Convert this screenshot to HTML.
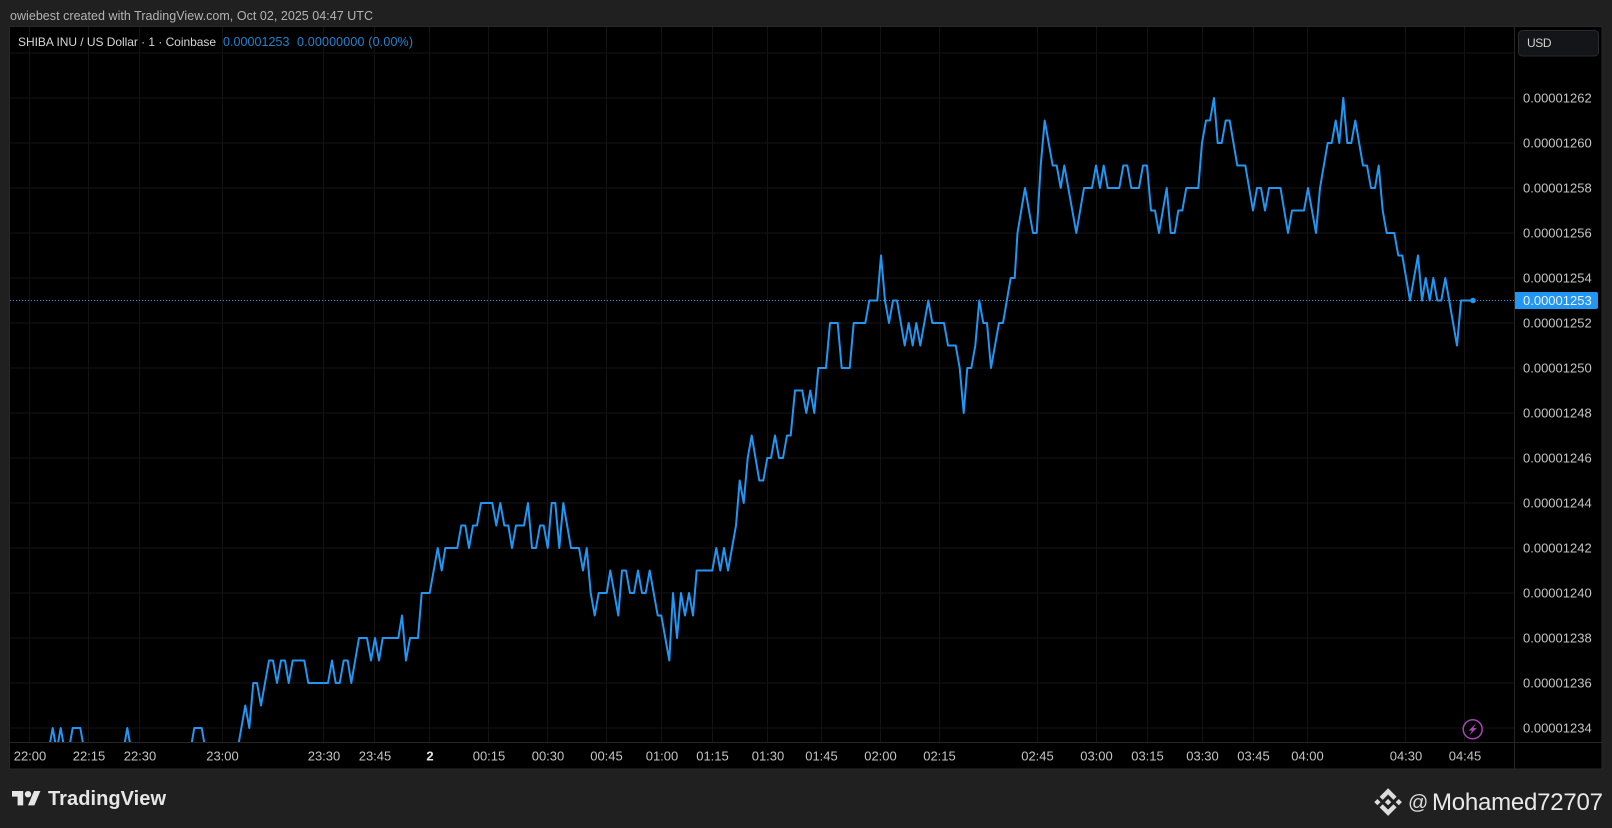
<!DOCTYPE html>
<html lang="en">
<head>
<meta charset="utf-8">
<title>SHIBA INU / US Dollar</title>
<style>
html,body{margin:0;padding:0;background:#202020;width:1612px;height:828px;overflow:hidden}
svg{display:block;filter:blur(.3px)}
text{font-family:"Liberation Sans",sans-serif}
</style>
</head>
<body>
<svg width="1612" height="828" viewBox="0 0 1612 828" xmlns="http://www.w3.org/2000/svg">
<defs><clipPath id="pane"><rect x="10" y="27" width="1504" height="715"/></clipPath></defs>
<rect width="1612" height="828" fill="#202020"/>
<text x="10" y="20" font-size="12.5" fill="#b4b4b4" textLength="363">owiebest created with TradingView.com, Oct 02, 2025 04:47 UTC</text>

<rect x="10" y="27" width="1592" height="742" fill="#000"/>
<rect x="9.5" y="26.5" width="1592.5" height="742.5" fill="none" stroke="#282828" stroke-width="1"/>

<g stroke="#131313" stroke-width="1" fill="none">
<path d="M29.5 27V742M88.5 27V742M139.5 27V742M222.5 27V742M323.5 27V742M374.5 27V742M429.5 27V742M488.5 27V742M547.5 27V742M606.5 27V742M661.5 27V742M712.5 27V742M767.5 27V742M821.5 27V742M880.5 27V742M939.5 27V742M1037.5 27V742M1096.5 27V742M1147.5 27V742M1202.5 27V742M1253.5 27V742M1307.5 27V742M1405.5 27V742M1464.5 27V742"/>
<path d="M10 53H1514M10 98H1514M10 143H1514M10 188H1514M10 233H1514M10 278H1514M10 323H1514M10 368H1514M10 413H1514M10 458H1514M10 503H1514M10 548H1514M10 593H1514M10 638H1514M10 683H1514M10 728H1514"/>
</g>
<path d="M1514.5 27V769M10 742.5H1602" stroke="#262626" stroke-width="1" fill="none"/>

<line x1="10" y1="300.5" x2="1514" y2="300.5" stroke="#2196f3" stroke-width="1" stroke-dasharray="1 2"/>

<g clip-path="url(#pane)">
<g transform="translate(0 98) scale(1 22.5)" fill="none" stroke="#2196f3" stroke-width="2" stroke-linejoin="round" stroke-linecap="round">
<polyline vector-effect="non-scaling-stroke" points="48.7,29 52.7,28 56.7,29 60.7,28 64.7,29 68.7,29 72.7,28 80.3,28 84.3,29 123.4,29 127.3,28 131.3,29 190.4,29 194.3,28 201.7,28 205.6,29 237.4,29 245.3,27 249.3,28 253.3,26 257,26 261,27 269,25 273,25 277,26 281,25 285,25 288.7,26 292.7,25 304.3,25 308.3,26 328,26 332,25 335.7,26 339.7,26 343.7,25 347.7,25 351.3,26 359,24 367,24 371,25 375,24 379,25 382.7,24 398.3,24 402,23 406,25 410,24 418,24 421.7,22 429.7,22 437.7,20 441.7,21 445.3,20 457.3,20 461.3,19 465.3,19 469,20 473,19 477,19 481,18 492.3,18 496.3,19 500.3,18 504.3,19 508.3,19 512,20 516,19 524,19 528,18 532,20 536,20 540,19 543.7,19 547.7,20 551.7,18 555.3,18 559.3,20 563.3,18 571,20 579,20 583,21 586.7,20 590.7,22 594.7,23 598.7,22 606.7,22 610.3,21 618.3,23 622,21 626,21 630,22 634,22 638,21 642,22 645.7,22 649.7,21 657.7,23 661.3,23 669.3,25 673,22 677,24 681,22 685,23 689,22 693,23 696.7,21 712.3,21 716.3,20 720.3,21 724,20 728,21 736,19 739.7,17 743.7,18 747.7,16 751.7,15 759.3,17 763.3,17 767.3,16 771,16 775,15 779,16 783,16 787,15 790.7,15 795,13 802.3,13 806.3,14 810.3,13 814.3,14 818.3,12 826,12 830,10 837.7,10 841.7,12 849.7,12 853.7,10 865.3,10 869.3,9 877.3,9 881,7 885,9 889,10 893,9 897,9 904.7,11 908.7,10 912.7,11 916.3,10 920.3,11 928.3,9 932.3,10 944,10 948,11 955.7,11 959.7,12 963.7,14 967.3,12 971.3,12 975.3,11 979.3,9 983.3,10 987,10 991,12 999,10 1003,10 1010.7,8 1014.7,8 1017.5,6 1025,4 1033,6 1036.7,6 1040.7,3 1044.7,1 1052.7,3 1056.7,3 1060.7,4 1064.3,3 1076.3,6 1084,4 1092,4 1096,3 1100,4 1103.7,3 1107.7,4 1119.3,4 1123.3,3 1127.3,3 1131.3,4 1139,4 1143,3 1147,3 1151,5 1155,5 1159,6 1166.7,4 1170.7,6 1174.7,6 1178.3,5 1182.3,5 1186.3,4 1198.3,4 1202,2 1206,1 1210,1 1214,0 1217.7,2 1221.7,2 1225.7,1 1229.7,1 1237.3,3 1245.3,3 1253,5 1257,4 1261,4 1265,5 1269,4 1280.5,4 1288,6 1292,5 1304,5 1308,4 1316,6 1320,4 1327.7,2 1331.7,2 1335.7,1 1339.3,2 1343.3,0 1347.3,2 1351.3,2 1355.3,1 1363,3 1367,3 1371,4 1375,4 1378.7,3 1382.7,5 1386.7,6 1394.3,6 1398.3,7 1402.3,7 1410,9 1418,7 1422,9 1425.7,8 1429.7,9 1433.3,8 1437.3,9 1441.3,9 1445.3,8 1457,11 1461,9 1472.7,9"/>
</g>
<circle cx="1473" cy="300.5" r="2.8" fill="#2196f3"/>
</g>

<text x="18" y="46" font-size="12" fill="#d6d6d6" textLength="198">SHIBA INU / US Dollar · 1 · Coinbase</text>
<text x="223" y="46" font-size="12.5" fill="#1e84d2" textLength="66.5">0.00001253</text>
<text x="297" y="46" font-size="12.5" fill="#1e84d2" textLength="116">0.00000000 (0.00%)</text>

<rect x="1518.5" y="30.5" width="80" height="25.5" rx="4" fill="#131519" stroke="#2a2c30" stroke-width="1"/>
<text x="1527" y="47" font-size="12" fill="#d0d0d0" textLength="24.5">USD</text>

<g font-size="13" fill="#c4c4c4">
<text x="1523" y="102.5">0.00001262</text>
<text x="1523" y="147.5">0.00001260</text>
<text x="1523" y="192.5">0.00001258</text>
<text x="1523" y="237.5">0.00001256</text>
<text x="1523" y="282.5">0.00001254</text>
<text x="1523" y="327.5">0.00001252</text>
<text x="1523" y="372.5">0.00001250</text>
<text x="1523" y="417.5">0.00001248</text>
<text x="1523" y="462.5">0.00001246</text>
<text x="1523" y="507.5">0.00001244</text>
<text x="1523" y="552.5">0.00001242</text>
<text x="1523" y="597.5">0.00001240</text>
<text x="1523" y="642.5">0.00001238</text>
<text x="1523" y="687.5">0.00001236</text>
<text x="1523" y="732.5">0.00001234</text>
</g>
<path d="M1515 292H1596a2 2 0 0 1 2 2V307a2 2 0 0 1 -2 2H1515Z" fill="#2196f3"/>
<text x="1523" y="305" font-size="13" fill="#f0f0f0">0.00001253</text>

<circle cx="1472.7" cy="729.3" r="9.5" fill="#000" stroke="#a745b5" stroke-width="1.5"/>
<path d="M1476 723.3L1468.6 730.6H1472L1469.4 735.3L1476.9 728H1473.4Z" fill="#a745b5"/>

<g font-size="13" fill="#c4c4c4" text-anchor="middle">
<text x="30" y="760.5">22:00</text>
<text x="89" y="760.5">22:15</text>
<text x="140" y="760.5">22:30</text>
<text x="222.5" y="760.5">23:00</text>
<text x="324" y="760.5">23:30</text>
<text x="375" y="760.5">23:45</text>
<text x="430" y="760.5" font-weight="bold" fill="#e4e4e4">2</text>
<text x="489" y="760.5">00:15</text>
<text x="548" y="760.5">00:30</text>
<text x="606.5" y="760.5">00:45</text>
<text x="662" y="760.5">01:00</text>
<text x="712.5" y="760.5">01:15</text>
<text x="768" y="760.5">01:30</text>
<text x="821.5" y="760.5">01:45</text>
<text x="880.5" y="760.5">02:00</text>
<text x="939.5" y="760.5">02:15</text>
<text x="1037.5" y="760.5">02:45</text>
<text x="1096.5" y="760.5">03:00</text>
<text x="1147.5" y="760.5">03:15</text>
<text x="1202.5" y="760.5">03:30</text>
<text x="1253.5" y="760.5">03:45</text>
<text x="1307.5" y="760.5">04:00</text>
<text x="1406" y="760.5">04:30</text>
<text x="1465" y="760.5">04:45</text>
</g>

<g transform="translate(12 787.8) scale(.8)" fill="#e6e6e6">
<path d="M14 22H7V11H0V4h14v18zM28 22h-8l7.5-18h8L28 22z"/>
<circle cx="20" cy="8" r="4"/>
</g>
<text x="48" y="805" font-size="20" font-weight="bold" fill="#e6e6e6" textLength="118">TradingView</text>

<g transform="translate(1374.3 788.3) scale(.218)" fill="#dcdcdc">
<path d="M38.73 53.2l24.59-24.58 24.6 24.6 14.3-14.31L63.32 0 24.43 38.9l14.3 14.3zM0 63.31l14.3-14.31 14.31 14.31-14.31 14.3zM38.73 73.41l24.59 24.59 24.6-24.6 14.31 14.29-38.9 38.91-38.91-38.88v-.03l14.31-14.28zM98 63.31L112.3 49l14.3 14.3-14.3 14.32zM77.83 63.3L63.32 48.78 52.59 59.51l-1.24 1.23-2.54 2.54 14.51 14.5 14.51-14.47z"/>
</g>
<text x="1408" y="809" font-size="20" fill="#dcdcdc" textLength="19">@</text>
<text x="1432" y="810" font-size="24" fill="#e8e8e8" textLength="171">Mohamed72707</text>
</svg>
</body>
</html>
